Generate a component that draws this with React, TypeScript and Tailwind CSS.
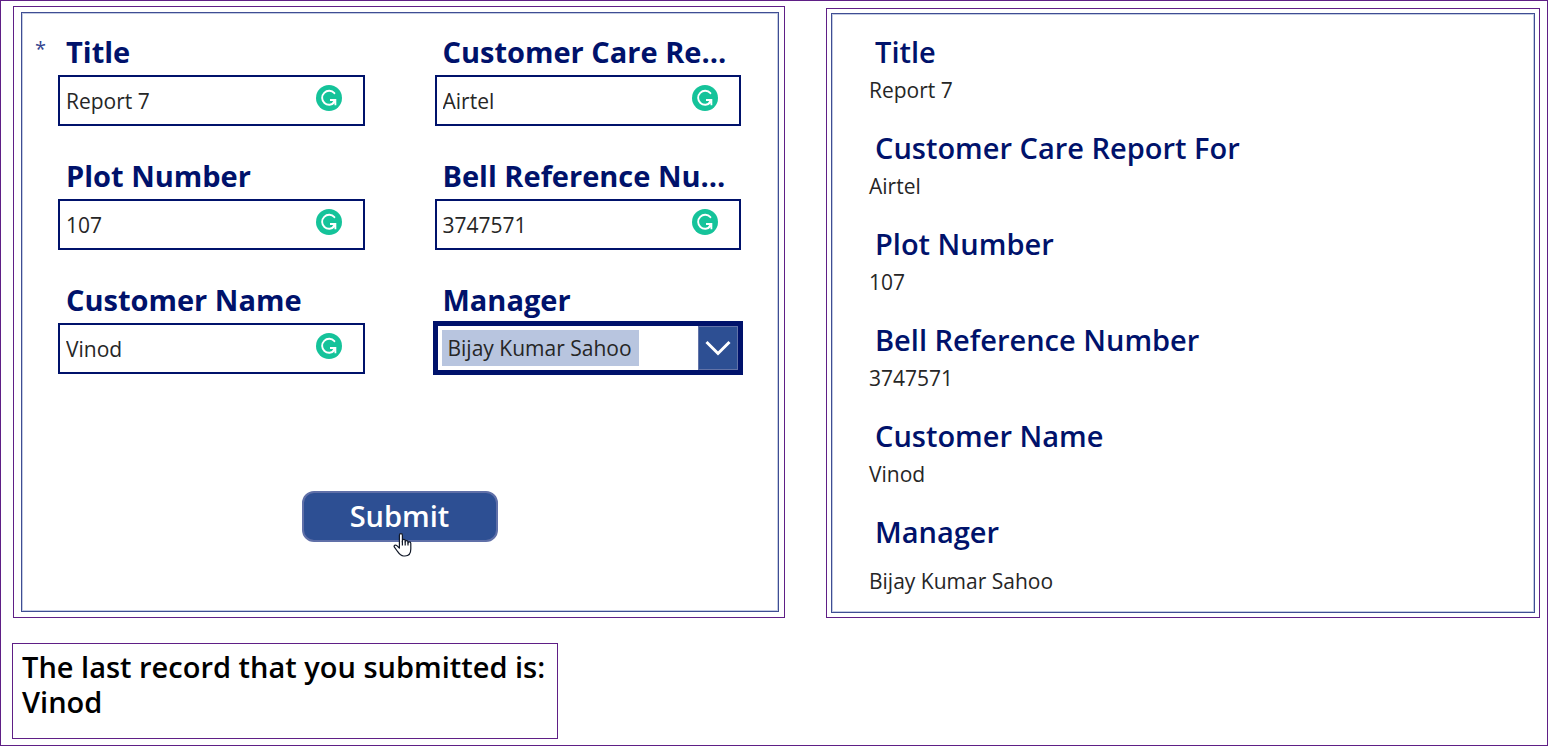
import React from 'react';

type Field = { id: string; label: string; value: string; required?: boolean };

const fields: Field[] = [
  { id: 'title', label: 'Title', value: 'Report 7', required: true },
  { id: 'report-for', label: 'Customer Care Report For', value: 'Airtel' },
  { id: 'plot', label: 'Plot Number', value: '107' },
  { id: 'bell', label: 'Bell Reference Number', value: '3747571' },
  { id: 'customer', label: 'Customer Name', value: 'Vinod' },
];

const manager = 'Bijay Kumar Sahoo';

function GrammarBadge() {
  return (
    <svg
      viewBox="0 0 26 26"
      className="absolute top-[10px] right-[23px] size-[26px]"
      aria-hidden="true"
    >
      <circle cx="13" cy="13" r="13" fill="#15c39a" />
      <path
        d="M18.4 8.2A7 7 0 1 0 18.6 17.2"
        fill="none"
        stroke="#fff"
        strokeWidth="1.9"
        strokeLinecap="round"
      />
      <path
        d="M14 15H19.4V20.2M19.2 15.2L16.8 18"
        fill="none"
        stroke="#fff"
        strokeWidth="1.8"
      />
    </svg>
  );
}

function HandCursor() {
  return (
    <svg
      viewBox="0 0 20 26"
      className="pointer-events-none absolute top-[41px] left-[91px] h-[26px] w-5"
      aria-hidden="true"
    >
      <path
        d="M6.4 16V3.2C6.4 1 9.4 1 9.4 3.2V10V8.6C9.4 7 12.2 7 12.2 8.8V10C12.2 8.2 15 8.2 15 10V11C15 9.4 17.8 9.6 17.8 11.4V17C17.8 21 16 24 12 24H10.6C7.6 24 6 21.6 4.2 19L1.4 15.2C.4 13.6 2.4 12.4 3.8 13.6Z"
        fill="#fff"
        stroke="#111827"
        strokeWidth="1.2"
        strokeLinejoin="round"
      />
      <path d="M9.4 9V13.5M12.2 9.5V13.5M15 10.5V13.5" stroke="#111827" strokeWidth="1.2" />
    </svg>
  );
}

function TextField({ field }: { field: Field }) {
  return (
    <div className="relative min-w-0">
      {field.required && (
        <span className="absolute -top-px -left-[23px] text-xl leading-9 text-[#33448f]">*</span>
      )}
      <label
        htmlFor={field.id}
        className="block truncate px-2 text-[29px] leading-10 font-bold text-[#00126b]"
      >
        {field.label}
      </label>
      <div className="relative mt-[3px]">
        <input
          id={field.id}
          defaultValue={field.value}
          className="block h-[51px] w-full border-2 border-[#00126b] bg-white px-[6px] text-[21px] font-normal text-[#262626] outline-none"
        />
        <GrammarBadge />
      </div>
    </div>
  );
}

function ManagerField() {
  return (
    <div className="min-w-0">
      <label
        htmlFor="manager"
        className="block truncate px-2 text-[29px] leading-10 font-bold text-[#00126b]"
      >
        Manager
      </label>
      <div className="-mx-[2px] mt-px flex h-[54px] items-center border-[5px] border-[#00126b] bg-white pl-1">
        <select
          id="manager"
          className="h-9 w-[197px] appearance-none bg-[#b8c5df] pl-[6px] text-[21px] leading-9 font-normal text-[#262626] outline-none"
        >
          <option>{manager}</option>
        </select>
        <div className="pointer-events-none ml-auto flex h-full w-10 items-center justify-center border border-[#6273a8] bg-[#2d4f93]">
          <svg viewBox="0 0 26 16" className="h-4 w-[26px]" aria-hidden="true">
            <path d="M1.5 2L13 13.5L24.5 2" fill="none" stroke="#fff" strokeWidth="3" />
          </svg>
        </div>
      </div>
    </div>
  );
}

export default function App() {
  return (
    <main className="flex min-h-screen flex-col border border-[#5f1f86] bg-white pt-[5px] pr-[7px] pb-[6px] pl-[11px] font-['Open_Sans',sans-serif] text-black">
      <div className="ml-px grid grid-cols-[772fr_714fr] gap-[41px]">
        <section className="border border-[#5f1f86] px-[5px] py-[5px] pl-[7px]">
          <form
            className="flex h-full flex-col border border-[#3f4d93] pt-[19px] pr-[37px] pl-9 shadow-[inset_0_0_0_1px_#c3cbe2]"
            onSubmit={(event) => event.preventDefault()}
          >
            <div className="grid grid-cols-2 gap-x-[70px] gap-y-[30px]">
              {fields.map((field) => (
                <TextField key={field.id} field={field} />
              ))}
              <ManagerField />
            </div>
            <div className="mt-[116px] flex justify-center">
              <div className="relative">
                <button
                  type="submit"
                  className="h-[51px] w-[196px] rounded-xl border-2 border-[#6070a8] bg-[#2d4f93] pb-[2px] text-[29px] leading-9 font-semibold text-white"
                >
                  Submit
                </button>
                <HandCursor />
              </div>
            </div>
          </form>
        </section>

        <section className="mt-[2px] border border-[#5f1f86] p-1">
          <dl className="h-full border border-[#3f4d93] px-[37px] pt-5 pb-[13px] shadow-[inset_0_0_0_1px_#c3cbe2]">
            {fields.map((field) => (
              <div key={field.id} className="h-24">
                <dt className="px-[6px] text-[29px] leading-9 font-semibold text-[#00126b]">
                  {field.label}
                </dt>
                <dd className="mt-[2px] text-[21px] leading-9 font-normal text-[#262626]">
                  {field.value}
                </dd>
              </div>
            ))}
            <div>
              <dt className="px-[6px] text-[29px] leading-9 font-semibold text-[#00126b]">
                Manager
              </dt>
              <dd className="mt-[13px] text-[21px] leading-9 font-normal text-[#262626]">
                {manager}
              </dd>
            </div>
          </dl>
        </section>
      </div>

      <section className="mt-[25px] min-h-24 w-[546px] border border-[#5f1f86] px-[9px] pt-[5px]">
        <p className="text-[29px] leading-[35px] font-semibold">
          The last record that you submitted is: Vinod
        </p>
      </section>
    </main>
  );
}
